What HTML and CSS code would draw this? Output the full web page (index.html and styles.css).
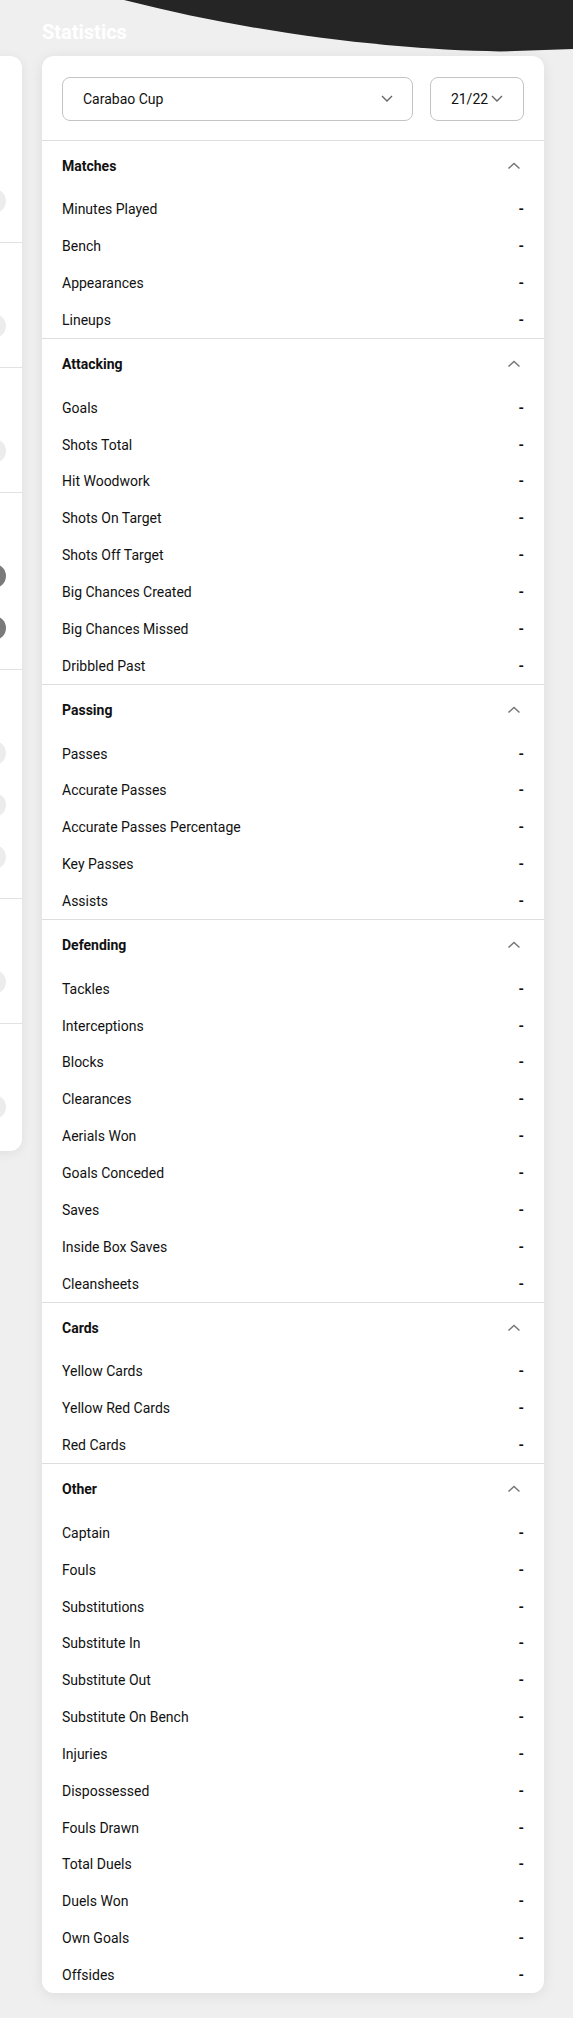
FILE: index.html
```html
<!DOCTYPE html>
<html lang="en">
<head>
<meta charset="utf-8">
<title>Statistics</title>
<link rel="stylesheet" href="styles.css">
</head>
<body>
<svg class="swoosh" width="573" height="60" viewBox="0 0 573 60" aria-hidden="true">
  <path d="M124 0 C260 35 400 50 500 51.5 L573 49 L573 0 Z" fill="#252525"/>
</svg>
<div class="page">
  <aside class="side-card">
    <div class="side-sec first"><span class="dot"></span></div>
    <div class="side-sec"><span class="dot"></span></div>
    <div class="side-sec"><span class="dot"></span></div>
    <div class="side-sec"><span class="dot dark"></span><span class="dot dark"></span></div>
    <div class="side-sec"><span class="dot"></span><span class="dot"></span><span class="dot"></span></div>
    <div class="side-sec"><span class="dot"></span></div>
    <div class="side-sec last"><span class="dot"></span></div>
  </aside>
  <main class="main">
    <h2 class="title">Statistics</h2>
    <div class="card">
      <div class="filters">
        <div class="select league">
          <span>Carabao Cup</span>
          <svg class="chev" width="18" height="10" viewBox="0 0 18 10"><path d="M4 2 L9 7 L14 2" fill="none" stroke="#666" stroke-width="1.4"/></svg>
        </div>
        <div class="select season">
          <span>21/22</span>
          <svg class="chev" width="12" height="10" viewBox="0 0 12 10"><path d="M1 2 L6 7 L11 2" fill="none" stroke="#666" stroke-width="1.4"/></svg>
        </div>
      </div>

      <section class="sec">
        <div class="sec-head"><span>Matches</span><svg width="20" height="10" viewBox="0 0 20 10"><path d="M4.5 7.5 L10 2.5 L15.5 7.5" fill="none" stroke="#777" stroke-width="1.5"/></svg></div>
        <div class="row"><span>Minutes Played</span><b>-</b></div>
        <div class="row"><span>Bench</span><b>-</b></div>
        <div class="row"><span>Appearances</span><b>-</b></div>
        <div class="row"><span>Lineups</span><b>-</b></div>
      </section>

      <section class="sec">
        <div class="sec-head"><span>Attacking</span><svg width="20" height="10" viewBox="0 0 20 10"><path d="M4.5 7.5 L10 2.5 L15.5 7.5" fill="none" stroke="#777" stroke-width="1.5"/></svg></div>
        <div class="row"><span>Goals</span><b>-</b></div>
        <div class="row"><span>Shots Total</span><b>-</b></div>
        <div class="row"><span>Hit Woodwork</span><b>-</b></div>
        <div class="row"><span>Shots On Target</span><b>-</b></div>
        <div class="row"><span>Shots Off Target</span><b>-</b></div>
        <div class="row"><span>Big Chances Created</span><b>-</b></div>
        <div class="row"><span>Big Chances Missed</span><b>-</b></div>
        <div class="row"><span>Dribbled Past</span><b>-</b></div>
      </section>

      <section class="sec">
        <div class="sec-head"><span>Passing</span><svg width="20" height="10" viewBox="0 0 20 10"><path d="M4.5 7.5 L10 2.5 L15.5 7.5" fill="none" stroke="#777" stroke-width="1.5"/></svg></div>
        <div class="row"><span>Passes</span><b>-</b></div>
        <div class="row"><span>Accurate Passes</span><b>-</b></div>
        <div class="row"><span>Accurate Passes Percentage</span><b>-</b></div>
        <div class="row"><span>Key Passes</span><b>-</b></div>
        <div class="row"><span>Assists</span><b>-</b></div>
      </section>

      <section class="sec">
        <div class="sec-head"><span>Defending</span><svg width="20" height="10" viewBox="0 0 20 10"><path d="M4.5 7.5 L10 2.5 L15.5 7.5" fill="none" stroke="#777" stroke-width="1.5"/></svg></div>
        <div class="row"><span>Tackles</span><b>-</b></div>
        <div class="row"><span>Interceptions</span><b>-</b></div>
        <div class="row"><span>Blocks</span><b>-</b></div>
        <div class="row"><span>Clearances</span><b>-</b></div>
        <div class="row"><span>Aerials Won</span><b>-</b></div>
        <div class="row"><span>Goals Conceded</span><b>-</b></div>
        <div class="row"><span>Saves</span><b>-</b></div>
        <div class="row"><span>Inside Box Saves</span><b>-</b></div>
        <div class="row"><span>Cleansheets</span><b>-</b></div>
      </section>

      <section class="sec">
        <div class="sec-head"><span>Cards</span><svg width="20" height="10" viewBox="0 0 20 10"><path d="M4.5 7.5 L10 2.5 L15.5 7.5" fill="none" stroke="#777" stroke-width="1.5"/></svg></div>
        <div class="row"><span>Yellow Cards</span><b>-</b></div>
        <div class="row"><span>Yellow Red Cards</span><b>-</b></div>
        <div class="row"><span>Red Cards</span><b>-</b></div>
      </section>

      <section class="sec">
        <div class="sec-head"><span>Other</span><svg width="20" height="10" viewBox="0 0 20 10"><path d="M4.5 7.5 L10 2.5 L15.5 7.5" fill="none" stroke="#777" stroke-width="1.5"/></svg></div>
        <div class="row"><span>Captain</span><b>-</b></div>
        <div class="row"><span>Fouls</span><b>-</b></div>
        <div class="row"><span>Substitutions</span><b>-</b></div>
        <div class="row"><span>Substitute In</span><b>-</b></div>
        <div class="row"><span>Substitute Out</span><b>-</b></div>
        <div class="row"><span>Substitute On Bench</span><b>-</b></div>
        <div class="row"><span>Injuries</span><b>-</b></div>
        <div class="row"><span>Dispossessed</span><b>-</b></div>
        <div class="row"><span>Fouls Drawn</span><b>-</b></div>
        <div class="row"><span>Total Duels</span><b>-</b></div>
        <div class="row"><span>Duels Won</span><b>-</b></div>
        <div class="row"><span>Own Goals</span><b>-</b></div>
        <div class="row"><span>Offsides</span><b>-</b></div>
      </section>
    </div>
  </main>
</div>
</body>
</html>
```
FILE: styles.css
```css
html, body {
  margin: 0;
  padding: 0;
}
body {
  background: #efefef;
  font-family: Roboto, "Liberation Sans", Arial, sans-serif;
  color: #111111;
  font-size: 14px;
  position: relative;
  min-height: 2018px;
  overflow-x: hidden;
}
.swoosh {
  position: absolute;
  top: 0;
  left: 0;
  display: block;
}
.page {
  position: relative;
  display: flex;
  align-items: flex-start;
  gap: 20px;
  padding-top: 20px;
}
.side-card {
  flex: 0 0 300px;
  margin-left: -278px;
  margin-top: 36px;
  background: #fff;
  border-radius: 12px;
  box-shadow: 0 2px 12px rgba(0, 0, 0, 0.07);
}
.side-sec {
  display: flex;
  flex-direction: column;
  align-items: flex-end;
  gap: 28px;
  padding: 71px 16px 29px 0;
  border-top: 1px solid #e2e2e2;
}
.side-sec.first {
  border-top: none;
  padding-top: 133px;
}
.side-sec.last {
  padding-bottom: 32px;
}
.dot {
  width: 24px;
  height: 24px;
  border-radius: 50%;
  background: #ececec;
}
.dot.dark {
  background: #7a7a7a;
}
.main {
  flex: 0 0 502px;
}
.title {
  margin: 0 0 12px;
  font-size: 20px;
  line-height: 24px;
  font-weight: 700;
  color: #ffffff;
}
.card {
  background: #fff;
  border-radius: 12px;
  box-shadow: 0 2px 14px rgba(0, 0, 0, 0.08);
  overflow: hidden;
}
.filters {
  display: flex;
  gap: 17px;
  padding: 21px 20px 19px;
}
.select {
  height: 44px;
  box-sizing: border-box;
  border: 1px solid #c4c4c4;
  border-radius: 8px;
  display: flex;
  align-items: center;
  color: #111111;
  font-size: 14px;
}
.select.league {
  flex: 1;
  justify-content: space-between;
  padding: 0 16px 0 20px;
}
.select.season {
  flex: 0 0 94px;
  gap: 3px;
  justify-content: center;
  padding: 0;
}
.chev {
  display: block;
}
.sec {
  border-top: 1px solid #dedede;
}
.sec-head {
  height: 50px;
  display: flex;
  align-items: center;
  justify-content: space-between;
  padding: 0 20px;
  font-weight: 700;
  font-size: 14px;
  color: #111111;
}
.sec-head svg {
  display: block;
}
.row {
  height: 36.85px;
  display: flex;
  align-items: center;
  justify-content: space-between;
  padding: 0 20px;
  font-size: 14px;
  color: #111111;
}
.row b {
  font-weight: 700;
  color: #111111;
}
```
